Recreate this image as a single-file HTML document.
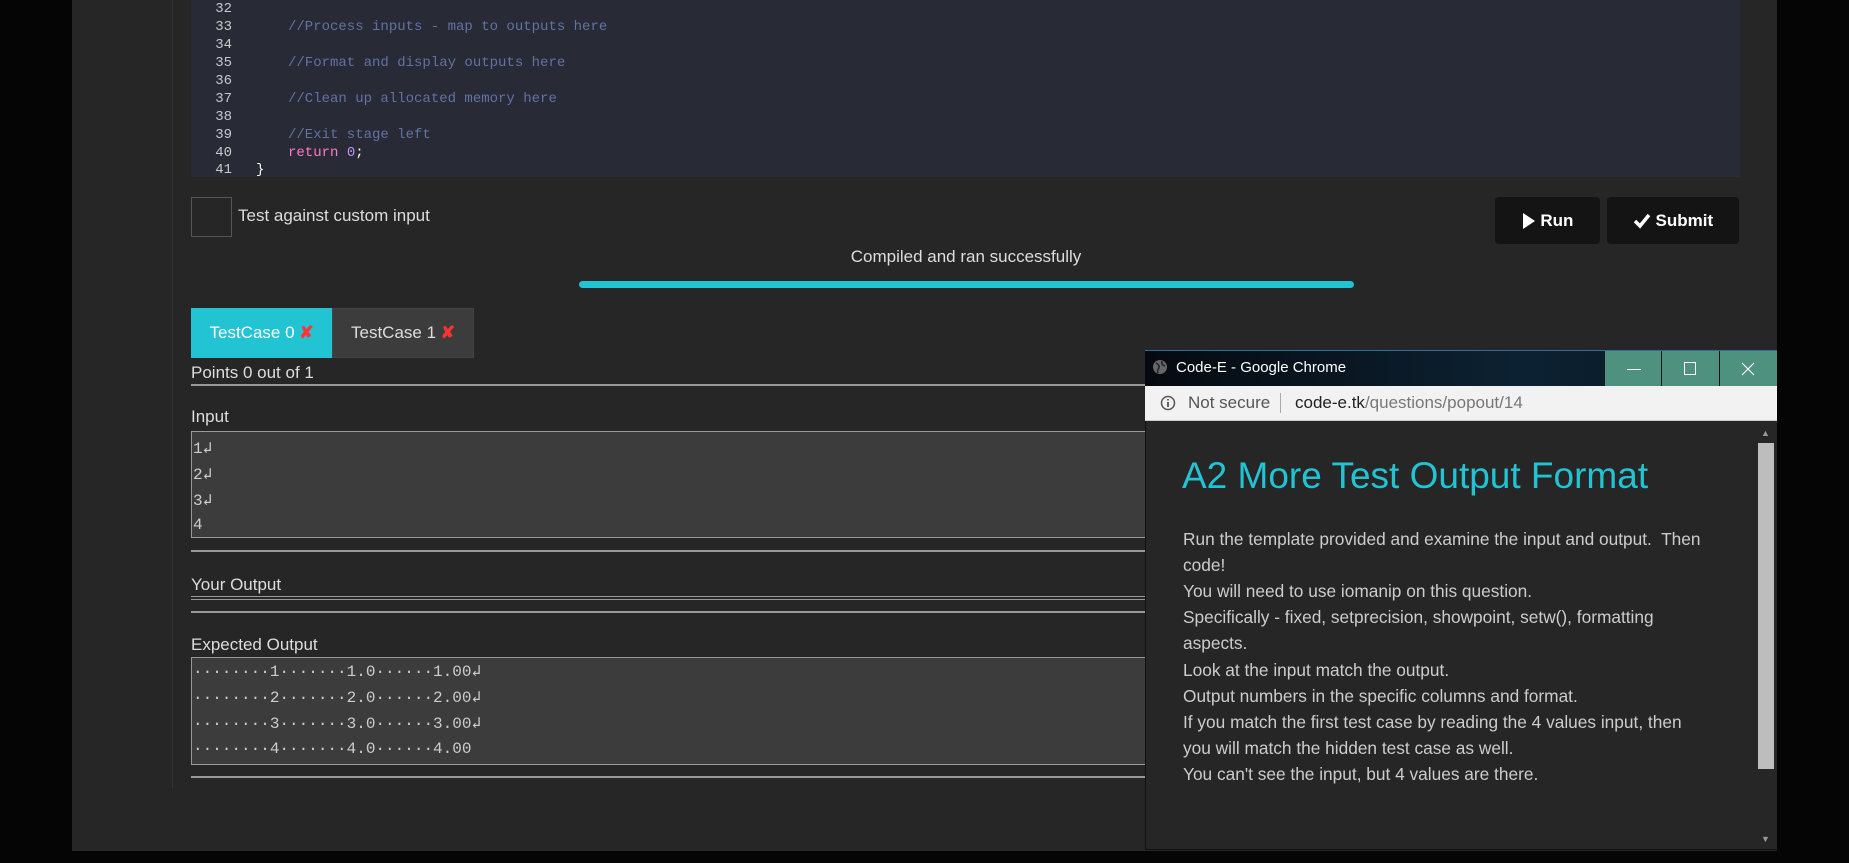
<!DOCTYPE html>
<html><head><meta charset="utf-8"><style>
*{margin:0;padding:0;box-sizing:border-box}
body{width:1849px;height:863px;background:#050505;position:relative;overflow:hidden;font-family:"Liberation Sans",sans-serif;color:#ddd}
.a{position:absolute}
.page{left:72px;top:0;width:1705px;height:851px;background:#262626}
.code{left:191px;top:0;width:1549px;height:177px;background:#282a36;font-family:"Liberation Mono",monospace;font-size:14px}
.ln{position:absolute;left:0;width:41px;text-align:right;color:#c8c8c8}
.cl{position:absolute;left:97px;color:#6272a4}
.hr{position:absolute;left:191px;width:1549px;height:2px;background:#999}
.lbl{position:absolute;left:191px;font-size:17px;color:#ddd}
.box{position:absolute;left:191px;width:1549px;background:#3c3c3c;border:1px solid #999;font-family:"Liberation Mono",monospace;font-size:16px;color:#ccc}
.box div{position:absolute;left:1px}
.btn{position:absolute;top:197px;height:47px;background:#141414;border-radius:4px;color:#fff;font-weight:bold;font-size:17px;display:flex;align-items:center;justify-content:center}
.p{position:absolute;left:1183px;font-size:17.3px;color:#ccc;white-space:nowrap}
</style></head><body>
<div class="a page"></div>
<div class="a" style="left:172px;top:0;width:1px;height:788px;background:#333"></div>
<div class="a code">
<div class="ln" style="top:1px">32</div>
<div class="ln" style="top:19px">33</div><div class="cl" style="top:19px">//Process inputs  - map to outputs here</div>
<div class="ln" style="top:37px">34</div>
<div class="ln" style="top:55px">35</div><div class="cl" style="top:55px">//Format and display outputs here</div>
<div class="ln" style="top:73px">36</div>
<div class="ln" style="top:91px">37</div><div class="cl" style="top:91px">//Clean up allocated memory here</div>
<div class="ln" style="top:109px">38</div>
<div class="ln" style="top:127px">39</div><div class="cl" style="top:127px">//Exit stage left</div>
<div class="ln" style="top:145px">40</div><div class="cl" style="top:145px"><span style="color:#ff79c6">return</span> <span style="color:#bd93f9">0</span><span style="color:#f8f8f2">;</span></div>
<div class="ln" style="top:162px">41</div><div class="cl" style="top:162px;left:65px;color:#f8f8f2">}</div>
</div>
<div class="a" style="left:191px;top:197px;width:41px;height:40px;border:1px solid #555"></div>
<div class="a" style="left:238px;top:206px;font-size:17px;color:#ddd">Test against custom input</div>
<div class="btn" style="left:1495px;width:105px"><svg width="14" height="18" viewBox="0 0 14 18"><path d="M1 1L13 9L1 17Z" fill="#fff"/></svg>&nbsp;Run</div>
<div class="btn" style="left:1607px;width:132px"><svg width="18" height="16" viewBox="0 0 18 16"><path d="M2 8L7 13L16 2" stroke="#fff" stroke-width="3.5" fill="none"/></svg>&nbsp;Submit</div>
<div class="a" style="left:766px;top:247px;width:400px;text-align:center;font-size:17px;color:#ddd">Compiled and ran successfully</div>
<div class="a" style="left:579px;top:281px;width:775px;height:7px;background:#22c3d3;border-radius:4px"></div>
<div class="a" style="left:191px;top:308px;width:141px;height:50px;background:#22c3d3;color:#fff;font-size:17px;line-height:50px;text-align:center">TestCase 0 <span style="color:#f33;font-weight:bold">✘</span></div>
<div class="a" style="left:332px;top:308px;width:142px;height:50px;background:#3c3c3c;border:1px solid #444;color:#ddd;font-size:17px;line-height:48px;text-align:center">TestCase 1 <span style="color:#f33;font-weight:bold">✘</span></div>
<div class="lbl" style="top:363px">Points 0 out of 1</div>
<div class="hr" style="top:384px"></div>
<div class="lbl" style="top:407px">Input</div>
<div class="box" style="top:431px;height:107px">
<div style="top:6px">1↲</div><div style="top:32px">2↲</div><div style="top:58px">3↲</div><div style="top:84px">4</div></div>
<div class="hr" style="top:550px"></div>
<div class="lbl" style="top:575px">Your Output</div>
<div class="hr" style="top:596px;height:1px"></div><div class="hr" style="top:599px;height:1px"></div>
<div class="hr" style="top:611px"></div>
<div class="lbl" style="top:635px">Expected Output</div>
<div class="box" style="top:657px;height:108px">
<div style="top:3px">········1·······1.0······1.00↲</div><div style="top:29px">········2·······2.0······2.00↲</div><div style="top:55px">········3·······3.0······3.00↲</div><div style="top:82px">········4·······4.0······4.00</div></div>
<div class="hr" style="top:776px"></div>

<!-- popup -->
<div class="a" style="left:1145px;top:350px;width:632px;height:500px;background:#262626;border:1px solid #111"></div>
<div class="a" style="left:1145px;top:350px;width:632px;height:36px;background:linear-gradient(90deg,#050a10 0%,#0b1c2a 45%,#0c2232 60%,#081420 100%);border-top:1px solid #2a6fa0"></div>
<svg class="a" style="left:1152px;top:359px" width="16" height="16" viewBox="0 0 16 16"><circle cx="8" cy="8" r="7" fill="#666"/><path d="M4 4Q8 6 7 9Q5 11 6 14M10 2Q9 6 13 7" stroke="#222" stroke-width="1.5" fill="none"/></svg>
<div class="a" style="left:1176px;top:359px;font-size:15px;color:#fff">Code-E - Google Chrome</div>
<div class="a" style="left:1605px;top:351px;width:172px;height:35px;background:#4f917f"></div>
<div class="a" style="left:1661px;top:351px;width:1px;height:35px;background:#111"></div>
<div class="a" style="left:1719px;top:351px;width:1px;height:35px;background:#111"></div>
<div class="a" style="left:1627px;top:369px;width:14px;height:1px;background:#fff"></div>
<div class="a" style="left:1684px;top:362px;width:12px;height:13px;border:1px solid #fff"></div>
<svg class="a" style="left:1741px;top:362px" width="14" height="14" viewBox="0 0 14 14"><path d="M1 1L13 13M13 1L1 13" stroke="#fff" stroke-width="1.2"/></svg>
<div class="a" style="left:1145px;top:386px;width:632px;height:35px;background:#f2f2f2;border-bottom:1px solid #ccc"></div>
<svg class="a" style="left:1160px;top:395px" width="16" height="16" viewBox="0 0 16 16"><circle cx="8" cy="8" r="6.5" stroke="#555" stroke-width="1.5" fill="none"/><path d="M8 7V12M8 4V5.5" stroke="#555" stroke-width="1.8"/></svg>
<div class="a" style="left:1188px;top:393px;font-size:17px;color:#555">Not secure</div>
<div class="a" style="left:1280px;top:393px;width:1px;height:20px;background:#aaa"></div>
<div class="a" style="left:1295px;top:393px;font-size:17px;color:#222">code-e.tk<span style="color:#777">/questions/popout/14</span></div>
<div class="a" style="left:1757px;top:421px;width:20px;height:428px;background:#262626"></div>
<div class="a" style="left:1758px;top:443px;width:16px;height:326px;background:#bdbdbd"></div>
<div class="a" style="left:1761px;top:428px;font-size:9px;color:#999">▲</div>
<div class="a" style="left:1761px;top:834px;font-size:9px;color:#999">▼</div>
<div class="a" style="left:1182px;top:455px;font-size:37px;color:#22c3d3;white-space:nowrap">A2 More Test Output Format</div>
<div class="p" style="top:529px">Run the template provided and examine the input and output.&nbsp; Then</div>
<div class="p" style="top:555px">code!</div>
<div class="p" style="top:581px">You will need to use iomanip on this question.</div>
<div class="p" style="top:607px">Specifically - fixed, setprecision, showpoint, setw(), formatting</div>
<div class="p" style="top:633px">aspects.</div>
<div class="p" style="top:660px">Look at the input match the output.</div>
<div class="p" style="top:686px">Output numbers in the specific columns and format.</div>
<div class="p" style="top:712px">If you match the first test case by reading the 4 values input, then</div>
<div class="p" style="top:738px">you will match the hidden test case as well.</div>
<div class="p" style="top:764px">You can't see the input, but 4 values are there.</div>
</body></html>
